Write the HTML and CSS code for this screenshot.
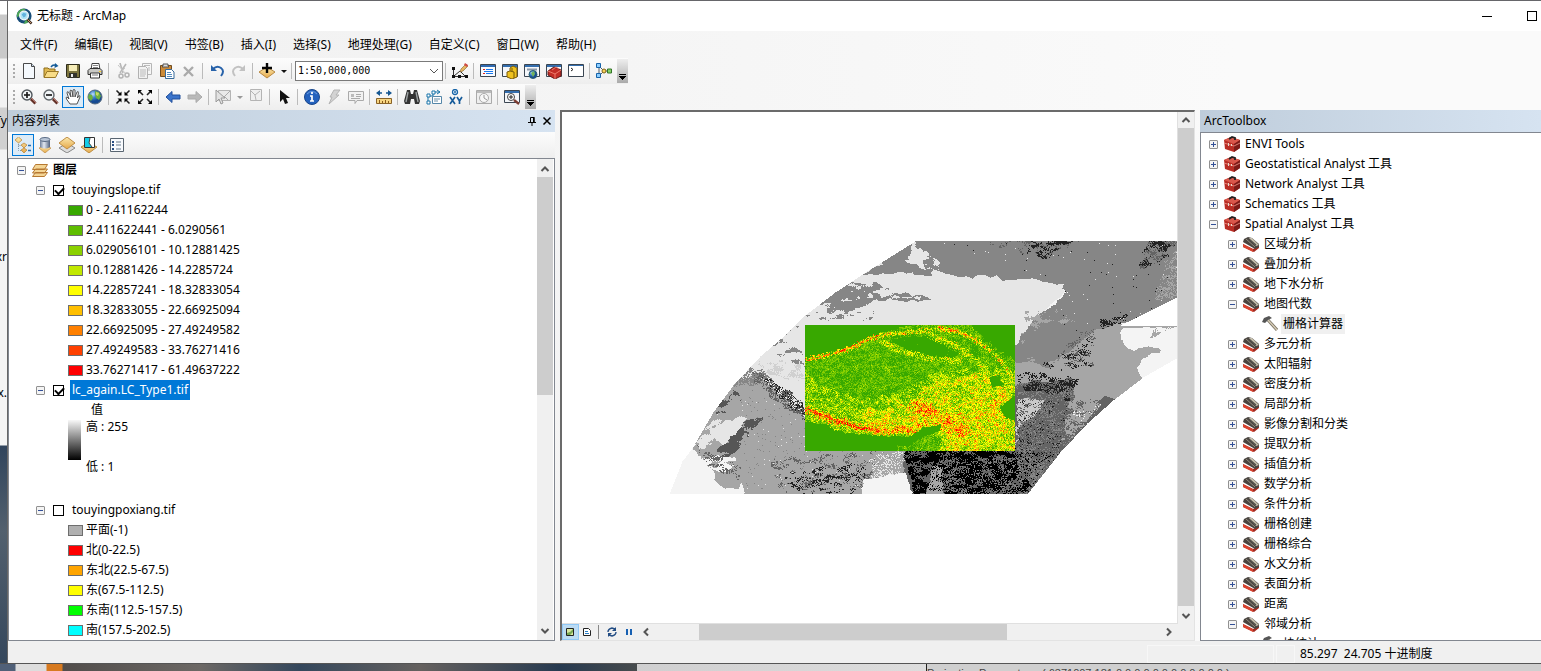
FILE: index.html
```html
<!DOCTYPE html>
<html lang="zh-CN">
<head>
<meta charset="utf-8">
<title>无标题 - ArcMap</title>
<link rel="stylesheet" href="styles.css">
</head>
<body>
<svg class="defs" width="0" height="0" aria-hidden="true">
<defs>
<linearGradient id="gold" x1="0" y1="0" x2="0" y2="1"><stop offset="0" stop-color="#fbe9ae"/><stop offset="1" stop-color="#e5a84a"/></linearGradient>
<linearGradient id="metal" x1="0" x2="1" y1="0" y2="0"><stop offset="0" stop-color="#6c7d98"/><stop offset=".4" stop-color="#e2e9f2"/><stop offset="1" stop-color="#50617d"/></linearGradient>
<radialGradient id="ocean" cx=".35" cy=".3"><stop offset="0" stop-color="#bfe0f8"/><stop offset=".5" stop-color="#3f83cf"/><stop offset="1" stop-color="#174b92"/></radialGradient>
</defs>
<symbol id="i-app" viewBox="0 0 18 18"><circle cx="8.500" cy="8.500" r="8" fill="#174d79"/><path d="M1 6Q4 0 10 1L8 4 5 4 4 8 1 10zM10 13l5-2-3 5-4 1z" fill="#4da557"/><circle cx="8.500" cy="8" r="4.600" fill="#aee3f4" stroke="#f2f8fb" stroke-width="1.400"/><path d="M6 7l2-2 3 1-1 3-2 1z" fill="#61b2dd"/><path d="M12 12l4.500 4.500" stroke="#3c2a20" stroke-width="2.600"/><path d="M12 12l4 4" stroke="#d5a37a"/></symbol>
<symbol id="i-new" viewBox="0 0 16 16"><path d="M2.500.500h8l3 3v12h-11z" fill="#f5f9fd" stroke="#4a4a4a"/><path d="M10.500.500v3h3" fill="#c9dcee" stroke="#4a4a4a"/></symbol>
<symbol id="i-open" viewBox="0 0 16 16"><path d="M1 14V5h4l1 1h6v3" fill="#e0b951" stroke="#8c6c1b"/><path d="M1 14.500l3-6h11.500l-3 6z" fill="#f8dc87" stroke="#9b7826"/><path d="M8 4q2-3 5-1.500" fill="none" stroke="#145b98" stroke-width="1.500"/><path d="M12 0l3.500 3-4 2z" fill="#145b98"/></symbol>
<symbol id="i-save" viewBox="0 0 16 16"><path d="M1.500 1.500h13v13h-12l-1-1z" fill="#7c743e" stroke="#2e2c1c"/><path d="M4 2h8v6H4z" fill="#f6edb8"/><path d="M4 10h8v5H4z" fill="#33332c"/><path d="M6 11h2v3H6z" fill="#eee"/></symbol>
<symbol id="i-print" viewBox="0 0 16 16"><path d="M4 7l1-6.500h7L13 7" fill="#fff" stroke="#444"/><path d="M6 2.500h5M6 4.500h5" stroke="#888"/><path d="M1 7.500l2-2h10l2 2v4H1z" fill="#c9c9c5" stroke="#333"/><path d="M3.500 10h9v5h-9z" fill="#fff" stroke="#333"/><path d="M5 12h6" stroke="#777"/><path d="M12 8h2v1h-2z" fill="#ffcf22"/></symbol>
<symbol id="i-cut" viewBox="0 0 16 16"><path d="M5 0l3 10M11 1L5 10" stroke="#b7b7b7" stroke-width="1.600"/><path d="M10 5L6 9M3 2l8 9" stroke="#c7c7c7"/><circle cx="6" cy="13" r="2" fill="none" stroke="#b3b3b3" stroke-width="1.500"/><circle cx="12" cy="12" r="2" fill="none" stroke="#b3b3b3" stroke-width="1.500"/></symbol>
<symbol id="i-copy" viewBox="0 0 16 16"><path d="M5.500.500h9v11h-9z" fill="#f6f6f6" stroke="#b6b6b6"/><path d="M1.500 3.500h7l2 2v10h-9z" fill="#f1f1f1" stroke="#b1b1b1"/><path d="M3 7h6M3 9h6M3 11h6M3 13h5M7 2.500h6M11 5h2M11 7h2" stroke="#bbb"/></symbol>
<symbol id="i-paste" viewBox="0 0 16 16"><path d="M1.500 2.500h11v11h-11z" fill="#cb8a38" stroke="#704c20"/><path d="M4 3V1h5v2l1 1H3z" fill="#ddd" stroke="#555"/><path d="M6.500 6.500h6l2.500 2.500v6.500H6.500z" fill="#fff" stroke="#376a9b"/><path d="M8 9.500h4M8 11.500h5M8 13.500h5" stroke="#558cc0"/></symbol>
<symbol id="i-del" viewBox="0 0 16 16"><path d="M3 4l9 9M12 4l-9 9" stroke="#aaa" stroke-width="2.400"/></symbol>
<symbol id="i-undo" viewBox="0 0 16 16"><path d="M4 6q4-4 8-1t0 8" fill="none" stroke="#2863aa" stroke-width="2"/><path d="M2 2v6h6z" fill="#2863aa"/></symbol>
<symbol id="i-redo" viewBox="0 0 16 16"><path d="M12 6Q8 2 4 5t0 8" fill="none" stroke="#c2c2c2" stroke-width="2"/><path d="M14 2v6H8z" fill="#c2c2c2"/></symbol>
<symbol id="i-add" viewBox="0 0 16 16"><path d="M0 9l8-5 8 5-8 6z" fill="url(#gold)" stroke="#b88943"/><path d="M8 0v10M3 5h10" stroke="#050505" stroke-width="2.400"/></symbol>
<symbol id="i-edit" viewBox="0 0 16 16"><path d="M1.500 5v8.500h13M2 13l6-5 5 5" fill="none" stroke="#333"/><path d="M0 4h3v3H0zM0 12h3v3H0zM6 12h3v3H6zM13 12h3v3h-3z" fill="#111"/><path d="M8 9l1-3 5-5 2 2-5 5z" fill="#e6b762" stroke="#82602d" stroke-width=".600"/><path d="M13 0l3 2-1 2-3-2z" fill="#d24c47"/></symbol>
<symbol id="i-toc" viewBox="0 0 16 16"><path d="M.500 1.500h15v12H.500z" fill="#f8fbff" stroke="#3b4652"/><path d="M1 2h14v2H1z" fill="#2f6bb2"/><path d="M3 6.500h2M3 10.500h2" stroke="#d22"/><path d="M6 6.500h7M4 8.500h9M6 10.500h7" stroke="#1878ef"/></symbol>
<symbol id="i-win" viewBox="0 0 16 16"><path d="M.500 1.500h15v12H.500z" fill="#f5f7fa" stroke="#3b4652"/><path d="M1 2h14v2H1z" fill="#346eae"/></symbol>
<symbol id="i-catalog" viewBox="0 0 16 16"><use href="#i-win"/><path d="M5 9l3-1V5l3-2 4 2v9l-5 2-5-2z" fill="#eec11e" stroke="#7d5d0a"/><path d="M8 8l4 1v6M10 5v3" fill="none" stroke="#725907"/></symbol>
<symbol id="i-search" viewBox="0 0 16 16"><use href="#i-win"/><path d="M3 6.500h10" stroke="#8a99aa" stroke-width="2"/><circle cx="9" cy="11.500" r="4" fill="url(#ocean)" stroke="#2a5f72"/><path d="M7 10l3-2 1 3-2 3z" fill="#71b35b"/></symbol>
<symbol id="i-tools" viewBox="0 0 16 16"><use href="#i-win"/><path d="M2 8l6-4 7 3v6l-6 3-7-4z" fill="#c32d26" stroke="#681d1a"/><path d="M6 7l4-3 3 2M2 8l7 3v5M9 11l6-4" fill="none" stroke="#ef7a6a"/></symbol>
<symbol id="i-python" viewBox="0 0 16 16"><path d="M.500 1.500h15v12H.500z" fill="#fff" stroke="#3b4652"/><path d="M1 2.500h14" stroke="#346eae"/><path d="M3 5l2 1.500L3 8" fill="none" stroke="#222"/></symbol>
<symbol id="i-model" viewBox="0 0 16 16"><path d="M3 3v10M3 3l5 5M3 13l5-5h6" fill="none" stroke="#4e5c68"/><path d="M.500.500h4v4h-4zM.500 10.500h4v4h-4z" fill="#8dceff" stroke="#1663a9"/><circle cx="8" cy="8" r="2" fill="#f8d058" stroke="#7e6418"/><path d="M11.500 6h4v4h-4z" fill="#88d268" stroke="#347529"/></symbol>
<symbol id="i-zin" viewBox="0 0 16 16"><circle cx="6" cy="6" r="5" fill="#f1f5f7" stroke="#4f565b" stroke-width="1.400"/><path d="M3 6h6M6 3v6" stroke="#111" stroke-width="1.600"/><path d="M10 10l4.500 4.500" stroke="#613027" stroke-width="3"/><path d="M10 9l5 5" stroke="#b27168"/></symbol>
<symbol id="i-zout" viewBox="0 0 16 16"><circle cx="6" cy="6" r="5" fill="#f1f5f7" stroke="#62686c" stroke-width="1.400"/><path d="M3 6h6" stroke="#111" stroke-width="1.600"/><path d="M10 10l4.500 4.500" stroke="#613027" stroke-width="3"/><path d="M10 9l5 5" stroke="#b27168"/></symbol>
<symbol id="i-pan" viewBox="0 0 16 16"><path d="M5 15L1.500 10Q.500 8 2 8l2 2L2 4q0-2 1.500-1L6 8 5 2q.500-2 2 0l1 6V1q1-1 2 0v7l2-5q1.500-1 1.500.500L12.500 9l1-2q2-1 1.500 1L12 15z" fill="#fff" stroke="#444" stroke-width=".900"/></symbol>
<symbol id="i-globe" viewBox="0 0 16 16"><circle cx="8" cy="8" r="7" fill="url(#ocean)" stroke="#55697e"/><path d="M8 2l4 1 2 4-2 4-3-2-1-4zM2 5l3 1 1 3-2 3-3-3z" fill="#6caf3e"/><path d="M9 3l3 1-1 3-2-1z" fill="#c8d764"/></symbol>
<symbol id="i-fixin" viewBox="0 0 16 16"><path d="M1.500 1.500l4 4M14.500 1.500l-4 4M1.500 14.500l4-4M14.500 14.500l-4-4" stroke="#222" stroke-width="1.600"/><path d="M6.500 2.500v4h-4zM9.500 2.500v4h4zM6.500 13.500v-4h-4zM9.500 13.500v-4h4z" fill="#000"/></symbol>
<symbol id="i-fixout" viewBox="0 0 16 16"><path d="M2 2l4 4M14 2l-4 4M2 14l4-4M14 14l-4-4" stroke="#222" stroke-width="1.600"/><path d="M1 5V1h4zM11 1h4v4zM1 11v4h4zM15 11v4h-4z" fill="#000"/></symbol>
<symbol id="i-back" viewBox="0 0 16 16"><path d="M1 8l6-5.500V6h8v4H7v3.500z" fill="#3b74cb" stroke="#214f9b"/></symbol>
<symbol id="i-fwd" viewBox="0 0 16 16"><path d="M15 8L9 2.500V6H1v4h8v3.500z" fill="#b9b9b9" stroke="#aaa"/></symbol>
<symbol id="i-selfeat" viewBox="0 0 16 16"><path d="M3.500 1.500h12v10h-12z" fill="#e9e9e9" stroke="#b4b4b4"/><path d="M9 8l6-6M9 7l4 4" fill="none" stroke="#aaa"/><path d="M1 1v12l3-3 2 5 2-1-2-5h4z" fill="#e2e2e2" stroke="#999"/></symbol>
<symbol id="i-clear" viewBox="0 0 16 16"><path d="M2.500.500h11v11h-11z" fill="#efefef" stroke="#b4b4b4"/><path d="M3 2l4 4 5-4M7 6l1 5" fill="none" stroke="#b4b4b4"/></symbol>
<symbol id="i-arrow" viewBox="0 0 16 16"><path d="M4 1v12l3-3 2 5 3-1-2-5h4z" fill="#111"/></symbol>
<symbol id="i-info" viewBox="0 0 16 16"><circle cx="8" cy="8" r="7.500" fill="#2361bd" stroke="#1a478b"/><path d="M3 5q5-5 10 0" fill="none" stroke="#6d9de1"/><path d="M8 3v2M6 7h2v5M6 12h4" fill="none" stroke="#fff" stroke-width="1.700"/></symbol>
<symbol id="i-bolt" viewBox="0 0 16 16"><path d="M8 1h6l-4 5h3L3 15l3-7H4z" fill="#d3d3d3" stroke="#b4b4b4"/></symbol>
<symbol id="i-popup" viewBox="0 0 16 16"><path d="M.500 2.500h15v9H9l-2 3v-3H.500z" fill="#f2f2f2" stroke="#aaa"/><path d="M3 5h3v3H3z" fill="#bbb"/><path d="M8 5.500h5M8 7.500h5M3 9.500h9" stroke="#aaa"/></symbol>
<symbol id="i-measure" viewBox="0 0 16 16"><path d="M2 4h4M10 4h4" stroke="#165792" stroke-width="1.500"/><path d="M0 4l4-3v6zM16 4l-4-3v6z" fill="#165792"/><path d="M.500 9.500h15v5H.500z" fill="#f7d581" stroke="#8a6328"/><path d="M3.500 11v3M6.500 12v2M9.500 11v3M12.500 12v2" stroke="#8a5b1a"/></symbol>
<symbol id="i-find" viewBox="0 0 16 16"><path d="M3 1h3l1 4h2l1-4h3l3 11-1 3h-4l-1-5H7l-1 5H1l-1-3z" fill="#333"/><path d="M4 3L2 13M12 3l2 10" stroke="#9ba0a1" stroke-width="1.400"/></symbol>
<symbol id="i-route" viewBox="0 0 16 16"><path d="M2 14V7h5V3h7M11 1l3 2-3 2" fill="none" stroke="#1875aa"/><path d="M1 5h3v3H1zM6 2h3v3H6zM1 12h3v3H1z" fill="#fff" stroke="#1875aa"/><path d="M6.500 7.500h9v7h-9z" fill="#fff" stroke="#5587a9"/><path d="M8 10h6M8 12h4" stroke="#6d91aa"/></symbol>
<symbol id="i-xy" viewBox="0 0 16 16"><circle cx="7" cy="3" r="2.500" fill="#eaf6ff" stroke="#1764a7" stroke-width="1.300"/><circle cx="7" cy="3" r="1" fill="#1764a7"/><path d="M2 8l5 7M7 8l-5 7M9 8l2.500 4L14 8M11.500 12v3" fill="none" stroke="#175c9b" stroke-width="1.700"/></symbol>
<symbol id="i-time" viewBox="0 0 16 16"><path d="M.500 1.500h15v13H.500z" fill="#eee" stroke="#aaa"/><path d="M1 3h14" stroke="#bbb" stroke-width="2"/><circle cx="8" cy="9" r="4.500" fill="#f7f7f7" stroke="#aaa"/><path d="M8 6v3l3 2" fill="none" stroke="#999"/></symbol>
<symbol id="i-viewer" viewBox="0 0 16 16"><use href="#i-win"/><circle cx="7" cy="8" r="3.500" fill="#fff" stroke="#444"/><path d="M5 8h4M7 6v4" stroke="#222"/><path d="M10 11l5 4" stroke="#7c3c31" stroke-width="2.300"/></symbol>
<symbol id="i-order" viewBox="0 0 16 16"><path d="M3.500 5v8.500H6M3.500 8.500H6" fill="none" stroke="#8797a5" stroke-dasharray="1 1"/><path d="M0 3l3.500-3L7 3 3.500 6zM6 8l3-2 3 2-3 3zM6 13l3-2 3 2-3 3z" fill="url(#gold)" stroke="#b78334" stroke-width=".700"/><path d="M13 8.500h3M13 13.500h3" stroke="#2770b6" stroke-width="1.500"/></symbol>
<symbol id="i-source" viewBox="0 0 16 16"><path d="M2 11l6-2 6 2-6 5z" fill="url(#gold)" stroke="#be8d42" stroke-width=".700"/><path d="M3 2v8q5 3 10 0V2z" fill="url(#metal)"/><ellipse cx="8" cy="2.500" rx="5" ry="2" fill="#b9c6d7" stroke="#596b84"/></symbol>
<symbol id="i-visible" viewBox="0 0 16 16"><path d="M0 11l8-5 8 5-8 5z" fill="#ddd" stroke="#888"/><path d="M0 6l8-6 8 6-8 6z" fill="url(#gold)" stroke="#be8d42"/></symbol>
<symbol id="i-selected" viewBox="0 0 16 16"><path d="M0 10l8-4 8 4-8 6z" fill="url(#gold)" stroke="#be8d42"/><path d="M3.500.500h10v10h-10z" fill="#fff" stroke="#333"/><path d="M4 1h5L8 6l3 4H4z" fill="#14cce8"/><path d="M9 1L8 6l3 4" fill="none" stroke="#444"/></symbol>
<symbol id="i-options" viewBox="0 0 16 16"><path d="M1.500 1.500h13v13h-13z" fill="#f8fafd" stroke="#596571"/><path d="M3 4h2v2H3zM3 7h2v2H3zM3 11h2v2H3z" fill="#294e83"/><path d="M7 5h5M7 8h5M7 12h5" stroke="#65788c"/></symbol>
<symbol id="i-layers" viewBox="0 0 16 16"><path d="M.500 14.500l3-4h12l-3 4zM.500 11l3-4h12l-3 4zM.500 7.500l3-5h12l-3 5z" fill="#f4d595" stroke="#b67932"/></symbol>
<symbol id="i-box" viewBox="0 0 16 16"><path d="M0 4l7-3 9 3v8l-6 4-9-3z" fill="#b92d25"/><path d="M0 4l7-3 9 3-6 4z" fill="#d9574b"/><path d="M10 8l6-4v8l-6 4z" fill="#7d1b18"/><path d="M0 7l10 3 6-3" fill="none" stroke="#ef9a8e" stroke-width=".800"/><path d="M5 3l3-2 3 1v2" fill="none" stroke="#222" stroke-width="1.800"/><path d="M4 7h1v3H4zM7 8h1v2H7z" fill="#e7d7cb"/></symbol>
<symbol id="i-set" viewBox="0 0 16 16"><path d="M0 8l10 5 6-3v2l-5 4L0 11z" fill="#a12a20"/><path d="M0 8l10 5v3L0 11z" fill="#d8432f"/><path d="M1 3l4-2 4 1 7 6v3l-4 2L0 6z" fill="#4a4540"/><path d="M6 2h3l7 7-3 1z" fill="#c5bfad"/><path d="M3 3l9 8" stroke="#918a7d"/><path d="M7 4l6 5" stroke="#54504a" stroke-width="1.200"/></symbol>
<symbol id="i-hammer" viewBox="0 0 16 16"><path d="M6 4l9 10" stroke="#746d5f" stroke-width="3"/><path d="M6 4l9 10" stroke="#d5cbb5" stroke-width="1.500"/><path d="M0 6l2-4 5-2 3 2-4 2-3 3z" fill="#555"/></symbol>
<symbol id="i-up" viewBox="0 0 16 16"><path d="M4.500 10L8 6.500l3.500 3.500" fill="none" stroke="#555" stroke-width="2"/></symbol>
<symbol id="i-down" viewBox="0 0 16 16"><path d="M4.500 6L8 9.500 11.500 6" fill="none" stroke="#555" stroke-width="2"/></symbol>
<symbol id="i-combo" viewBox="0 0 16 16"><path d="M4 6l4 4 4-4" fill="none" stroke="#555"/></symbol>
<symbol id="i-left" viewBox="0 0 16 16"><path d="M10 4.500L6.500 8l3.500 3.500" fill="none" stroke="#555" stroke-width="2"/></symbol>
<symbol id="i-right" viewBox="0 0 16 16"><path d="M6 4.500L9.500 8 6 11.500" fill="none" stroke="#555" stroke-width="2"/></symbol>
<symbol id="i-dataview" viewBox="0 0 16 16"><path d="M4.500 4.500h7v7h-7z" fill="#d9e7a2" stroke="#222"/><path d="M5 9l3-1 3-3v3l-3 3H5z" fill="#76a753"/></symbol>
<symbol id="i-layout" viewBox="0 0 16 16"><path d="M4.500 4.500h5l2 2v5h-7z" fill="#fff" stroke="#222"/><path d="M6 7h3v1H6zM6 9h4v1H6z" fill="#287dc5"/></symbol>
<symbol id="i-refresh" viewBox="0 0 16 16"><path d="M4 8q0-3 4-4l3 1M12 8q0 3-4 4l-3-1" fill="none" stroke="#234d84" stroke-width="1.400"/><path d="M12 3v4H8zM4 13V9h4z" fill="#234d84"/></symbol>
<symbol id="i-pause" viewBox="0 0 16 16"><path d="M5 5h2v6H5zM9 5h2v6H9z" fill="#1760b2"/></symbol>
<symbol id="i-pin" viewBox="0 0 10 10"><path d="M3.500 6V1.500H7V6M1 6.500h8M5 7v3" fill="none" stroke="#000"/><path d="M6 1h1.500v5H6z" fill="#000"/></symbol>
<symbol id="i-close" viewBox="0 0 10 10"><path d="M1.500 1.500l7 7M8.500 1.500l-7 7" stroke="#000" stroke-width="1.500"/></symbol>
</svg>

<div class="desktop">
  <aside class="behind-left" aria-hidden="true"><span>Ty</span><span>xr</span><span>x.</span></aside>
  <div class="window">
    <header class="titlebar">
      <svg class="app-icon"><use href="#i-app"/></svg>
      <h1>无标题 - ArcMap</h1>
      <div class="window-controls"><button class="minimize" aria-label="最小化"></button><button class="maximize" aria-label="最大化"></button></div>
    </header>
    <nav class="menubar">
      <button>文件(F)</button><button>编辑(E)</button><button>视图(V)</button><button>书签(B)</button><button>插入(I)</button><button>选择(S)</button><button>地理处理(G)</button><button>自定义(C)</button><button>窗口(W)</button><button>帮助(H)</button>
    </nav>
    <div class="toolbar" role="toolbar" aria-label="标准工具">
      <i class="grip"></i>
      <button aria-label="新建"><svg><use href="#i-new"/></svg></button><button aria-label="打开"><svg><use href="#i-open"/></svg></button><button aria-label="保存"><svg><use href="#i-save"/></svg></button><button aria-label="打印"><svg><use href="#i-print"/></svg></button><i class="sep"></i>
      <button aria-label="剪切"><svg><use href="#i-cut"/></svg></button><button aria-label="复制"><svg><use href="#i-copy"/></svg></button><button aria-label="粘贴"><svg><use href="#i-paste"/></svg></button><button aria-label="删除"><svg><use href="#i-del"/></svg></button><i class="sep"></i>
      <button aria-label="撤消"><svg><use href="#i-undo"/></svg></button><button aria-label="恢复"><svg><use href="#i-redo"/></svg></button><i class="sep"></i>
      <button aria-label="添加数据"><svg><use href="#i-add"/></svg></button><button class="drop" aria-label="更多数据"></button><i class="sep"></i>
      <div class="scale"><select aria-label="比例尺"><option>1:50,000,000</option></select><svg><use href="#i-combo"/></svg></div><i class="sep"></i>
      <button aria-label="编辑器"><svg><use href="#i-edit"/></svg></button><i class="sep"></i>
      <button aria-label="内容列表"><svg><use href="#i-toc"/></svg></button><button aria-label="目录"><svg><use href="#i-catalog"/></svg></button><button aria-label="搜索"><svg><use href="#i-search"/></svg></button><button aria-label="工具箱"><svg><use href="#i-tools"/></svg></button><button aria-label="Python"><svg><use href="#i-python"/></svg></button><i class="sep"></i>
      <button aria-label="模型构建器"><svg><use href="#i-model"/></svg></button><button class="overflow" aria-label="工具栏选项"></button>
    </div>
    <div class="toolbar" role="toolbar" aria-label="地图工具">
      <i class="grip"></i>
      <button aria-label="放大"><svg><use href="#i-zin"/></svg></button><button aria-label="缩小"><svg><use href="#i-zout"/></svg></button><button class="active" aria-label="平移"><svg><use href="#i-pan"/></svg></button><button aria-label="全图"><svg><use href="#i-globe"/></svg></button><i class="sep"></i>
      <button aria-label="固定比例放大"><svg><use href="#i-fixin"/></svg></button><button aria-label="固定比例缩小"><svg><use href="#i-fixout"/></svg></button><i class="sep"></i>
      <button aria-label="上一视图"><svg><use href="#i-back"/></svg></button><button aria-label="下一视图"><svg><use href="#i-fwd"/></svg></button><i class="sep"></i>
      <button aria-label="选择要素"><svg><use href="#i-selfeat"/></svg></button><button class="drop muted" aria-label="选择方式"></button><button aria-label="清除选择"><svg><use href="#i-clear"/></svg></button><i class="sep"></i>
      <button aria-label="选择元素"><svg><use href="#i-arrow"/></svg></button><i class="sep"></i>
      <button aria-label="识别"><svg><use href="#i-info"/></svg></button><button aria-label="超链接"><svg><use href="#i-bolt"/></svg></button><button aria-label="弹出窗口"><svg><use href="#i-popup"/></svg></button><i class="sep"></i>
      <button aria-label="测量"><svg><use href="#i-measure"/></svg></button><i class="sep"></i>
      <button aria-label="查找"><svg><use href="#i-find"/></svg></button><button aria-label="查找路径"><svg><use href="#i-route"/></svg></button><button aria-label="转到 XY"><svg><use href="#i-xy"/></svg></button><i class="sep"></i>
      <button aria-label="时间滑块"><svg><use href="#i-time"/></svg></button><i class="sep"></i>
      <button aria-label="查看器"><svg><use href="#i-viewer"/></svg></button><button class="overflow" aria-label="工具栏选项"></button>
    </div>

    <main class="workspace">
      <section class="panel">
        <header class="panel-title"><h2>内容列表</h2><button aria-label="自动隐藏"><svg><use href="#i-pin"/></svg></button><button aria-label="关闭"><svg><use href="#i-close"/></svg></button></header>
        <div class="toc-tools"><button class="active" aria-label="按绘制顺序列出"><svg><use href="#i-order"/></svg></button><button aria-label="按源列出"><svg><use href="#i-source"/></svg></button><button aria-label="按可见性列出"><svg><use href="#i-visible"/></svg></button><button aria-label="按选择列出"><svg><use href="#i-selected"/></svg></button><i class="sep"></i><button aria-label="选项"><svg><use href="#i-options"/></svg></button></div>
        <div class="toc-body">
          <ul class="toc">
            <li class="row root"><button class="exp" aria-label="折叠"></button><svg><use href="#i-layers"/></svg><b>图层</b></li>
            <li class="row layer"><button class="exp" aria-label="折叠"></button><input type="checkbox" id="l1" checked><label for="l1">touyingslope.tif</label></li>
            <li class="row cls"><i class="sw c1"></i>0 - 2.41162244</li>
            <li class="row cls"><i class="sw c2"></i>2.411622441 - 6.0290561</li>
            <li class="row cls"><i class="sw c3"></i>6.029056101 - 10.12881425</li>
            <li class="row cls"><i class="sw c4"></i>10.12881426 - 14.2285724</li>
            <li class="row cls"><i class="sw c5"></i>14.22857241 - 18.32833054</li>
            <li class="row cls"><i class="sw c6"></i>18.32833055 - 22.66925094</li>
            <li class="row cls"><i class="sw c7"></i>22.66925095 - 27.49249582</li>
            <li class="row cls"><i class="sw c8"></i>27.49249583 - 33.76271416</li>
            <li class="row cls"><i class="sw c9"></i>33.76271417 - 61.49637222</li>
            <li class="row layer"><button class="exp" aria-label="折叠"></button><input type="checkbox" id="l2" checked><label for="l2" class="picked">lc_again.LC_Type1.tif</label></li>
            <li class="row value">值</li>
            <li class="stretch"><i class="ramp"></i><div><span>高 : 255</span><span>低 : 1</span></div></li>
            <li class="row layer"><button class="exp" aria-label="折叠"></button><input type="checkbox" id="l3"><label for="l3">touyingpoxiang.tif</label></li>
            <li class="row cls"><i class="sw d1"></i>平面(-1)</li>
            <li class="row cls"><i class="sw c9"></i>北(0-22.5)</li>
            <li class="row cls"><i class="sw d2"></i>东北(22.5-67.5)</li>
            <li class="row cls"><i class="sw c5"></i>东(67.5-112.5)</li>
            <li class="row cls"><i class="sw d3"></i>东南(112.5-157.5)</li>
            <li class="row cls"><i class="sw d4"></i>南(157.5-202.5)</li>
          </ul>
          <div class="vbar toc-bar"><svg><use href="#i-up"/></svg><div class="track"><i class="thumb"></i><i class="rest"></i></div><svg><use href="#i-down"/></svg></div>
        </div>
      </section>

      <section class="map-pane">
        <div class="map-view"><canvas id="map" width="508" height="253" role="img" aria-label="坡度与土地覆盖地图"></canvas></div>
        <div class="vbar map-bar"><svg><use href="#i-up"/></svg><div class="track"><i class="thumb"></i><i class="rest"></i></div><svg><use href="#i-down"/></svg></div>
        <div class="hbar"><button class="on" aria-label="数据视图"><svg><use href="#i-dataview"/></svg></button><button aria-label="布局视图"><svg><use href="#i-layout"/></svg></button><i class="line"></i><button aria-label="刷新"><svg><use href="#i-refresh"/></svg></button><button aria-label="暂停"><svg><use href="#i-pause"/></svg></button><svg><use href="#i-left"/></svg><div class="htrack"><i class="before"></i><i class="thumb"></i><i class="after"></i></div><svg><use href="#i-right"/></svg></div>
      </section>

      <section class="panel">
        <header class="panel-title"><h2>ArcToolbox</h2></header>
        <ul class="toolbox">
          <li class="row"><button class="exp plus" aria-label="展开"></button><svg><use href="#i-box"/></svg>ENVI Tools</li>
          <li class="row"><button class="exp plus" aria-label="展开"></button><svg><use href="#i-box"/></svg>Geostatistical Analyst 工具</li>
          <li class="row"><button class="exp plus" aria-label="展开"></button><svg><use href="#i-box"/></svg>Network Analyst 工具</li>
          <li class="row"><button class="exp plus" aria-label="展开"></button><svg><use href="#i-box"/></svg>Schematics 工具</li>
          <li class="row"><button class="exp" aria-label="折叠"></button><svg><use href="#i-box"/></svg>Spatial Analyst 工具</li>
          <li class="row sub"><button class="exp plus" aria-label="展开"></button><svg><use href="#i-set"/></svg>区域分析</li>
          <li class="row sub"><button class="exp plus" aria-label="展开"></button><svg><use href="#i-set"/></svg>叠加分析</li>
          <li class="row sub"><button class="exp plus" aria-label="展开"></button><svg><use href="#i-set"/></svg>地下水分析</li>
          <li class="row sub"><button class="exp" aria-label="折叠"></button><svg><use href="#i-set"/></svg>地图代数</li>
          <li class="row leaf"><svg><use href="#i-hammer"/></svg><span class="hot">栅格计算器</span></li>
          <li class="row sub"><button class="exp plus" aria-label="展开"></button><svg><use href="#i-set"/></svg>多元分析</li>
          <li class="row sub"><button class="exp plus" aria-label="展开"></button><svg><use href="#i-set"/></svg>太阳辐射</li>
          <li class="row sub"><button class="exp plus" aria-label="展开"></button><svg><use href="#i-set"/></svg>密度分析</li>
          <li class="row sub"><button class="exp plus" aria-label="展开"></button><svg><use href="#i-set"/></svg>局部分析</li>
          <li class="row sub"><button class="exp plus" aria-label="展开"></button><svg><use href="#i-set"/></svg>影像分割和分类</li>
          <li class="row sub"><button class="exp plus" aria-label="展开"></button><svg><use href="#i-set"/></svg>提取分析</li>
          <li class="row sub"><button class="exp plus" aria-label="展开"></button><svg><use href="#i-set"/></svg>插值分析</li>
          <li class="row sub"><button class="exp plus" aria-label="展开"></button><svg><use href="#i-set"/></svg>数学分析</li>
          <li class="row sub"><button class="exp plus" aria-label="展开"></button><svg><use href="#i-set"/></svg>条件分析</li>
          <li class="row sub"><button class="exp plus" aria-label="展开"></button><svg><use href="#i-set"/></svg>栅格创建</li>
          <li class="row sub"><button class="exp plus" aria-label="展开"></button><svg><use href="#i-set"/></svg>栅格综合</li>
          <li class="row sub"><button class="exp plus" aria-label="展开"></button><svg><use href="#i-set"/></svg>水文分析</li>
          <li class="row sub"><button class="exp plus" aria-label="展开"></button><svg><use href="#i-set"/></svg>表面分析</li>
          <li class="row sub"><button class="exp plus" aria-label="展开"></button><svg><use href="#i-set"/></svg>距离</li>
          <li class="row sub"><button class="exp" aria-label="折叠"></button><svg><use href="#i-set"/></svg>邻域分析</li>
          <li class="row leaf"><svg><use href="#i-hammer"/></svg><span>块统计</span></li>
        </ul>
      </section>
    </main>
    <footer class="statusbar"><span class="cell wide"></span><span class="cell small"></span><output>85.297 &nbsp;24.705 十进制度</output></footer>
  </div>
  <div class="behind-bottom" aria-hidden="true"><i class="photo"></i><i class="gray"></i><span>Projection Parameters: ( 6371007.181 0 0 0 0 0 0 0 0 0 0 0 0 )</span></div>
</div>
<script src="map.js"></script>
</body>
</html>
```

FILE: styles.css
```css
* { box-sizing: border-box; }
body { margin: 0; overflow: hidden; font: 12px/20px "Noto Sans", "Noto Sans CJK SC", sans-serif; color: #000; }
h1, h2, ul { margin: 0; padding: 0; font: inherit; list-style: none; }
button { margin: 0; padding: 0; border: 0; background: none; font: inherit; color: inherit; }
svg { display: block; flex: none; width: 16px; height: 16px; }
.defs { position: absolute; width: 0; height: 0; }
.desktop { display: grid; grid-template: minmax(0, 1fr) 8px / 8px minmax(0, 1fr); height: 100vh; border-top: 1px solid #66666a; background: #46505c; }
.behind-left { display: flex; flex-direction: column; overflow: hidden; padding-top: 110px; gap: 116px; border-right: 1px solid #666; background: linear-gradient(#fff 13px, #c9c9c9 14px 57px, #f2f2f2 58px 106px, #d0d0d0 107px 148px, #f4f4f4 149px 444px, #30445c 445px, #52606e 530px, #35475c 100%); }
.behind-left span { display: flex; justify-content: flex-end; }
.behind-bottom { grid-column: 1 / -1; display: grid; grid-template-columns: 637fr 289fr 615fr; overflow: hidden; border-top: 1px solid #555; background: #cfcfcf; }
.photo { background: linear-gradient(90deg, #506078 15px, #ddd 16px 46px, #d77a20 47px 62px, #514d4b 63px, #6c6865 200px, #34475c 300px, #65615f 420px, #273a50 560px, #474b4d); }
.gray { background: linear-gradient(90deg, #cfcfd0, #ddd); }
.behind-bottom span { padding-top: 2px; font: 11px/14px "Liberation Sans", sans-serif; color: #444; white-space: nowrap; border-left: 1px solid #222; }

.window { display: flex; flex-direction: column; min-height: 0; background: linear-gradient(90deg, #f0f0f0, #fafafa 80%); }
.titlebar { display: flex; align-items: center; gap: 4px; flex: none; height: 30px; padding: 0 4px 0 8px; background: #fff; }
.app-icon { width: 17px; height: 17px; }
.window-controls { display: flex; gap: 35px; margin-left: auto; }
.window-controls button { width: 10px; height: 10px; }
.window-controls .minimize { background: linear-gradient(#000, #000) center / 10px 1px no-repeat; }
.window-controls .maximize { border: 1px solid #000; }
.menubar { display: flex; gap: 17px; flex: none; height: 27px; padding: 4px 12px; }
.menubar button { white-space: nowrap; }
.toolbar { display: flex; align-items: center; align-self: flex-start; flex: none; height: 26px; padding-left: 5px; background: linear-gradient(#fcfcfc, #eee); }
.toolbar button, .toc-tools button { display: flex; align-items: center; justify-content: center; width: 22px; height: 22px; }
.grip { width: 2px; height: 15px; margin-right: 3px; background: repeating-linear-gradient(#aaa 0 2px, transparent 2px 4px); }
.sep { width: 6px; height: 16px; background: linear-gradient(#bbb, #bbb) 2px 0 / 1px 100% no-repeat; }
.toolbar .active, .toc-tools .active { border: 1px solid #0078d7; background: #dcebf7; }
.toolbar .drop { width: 11px; }
.drop::after { content: ""; border: 3px solid transparent; border-top-color: #111; border-bottom: 0; }
.drop.muted::after { border-top-color: #999; }
.scale { display: flex; align-items: center; width: 148px; height: 20px; border: 1px solid #7a7a7a; background: #fff; }
.scale select { flex: 1; min-width: 0; appearance: none; border: 0; padding: 0 2px; background: none; color: #000; font: 10px/16px "DejaVu Sans Mono", monospace; }
.toolbar .overflow { align-items: flex-end; width: 11px; height: 24px; margin-left: 2px; padding-bottom: 3px; background: linear-gradient(#eee, #aaa); }
.overflow::after { content: ""; width: 7px; height: 6px; background: linear-gradient(#000, #000) top / 7px 1px no-repeat, conic-gradient(from -45deg at 50% 100%, #000 90deg, transparent 0) bottom / 7px 4px no-repeat; }

.workspace { display: grid; grid-template-columns: minmax(0, 547fr) minmax(0, 635fr) minmax(0, 341fr); gap: 5px; flex: 1; min-height: 0; }
.panel { display: flex; flex-direction: column; min-width: 0; min-height: 0; }
.panel-title { display: flex; align-items: center; gap: 5px; flex: none; height: 22px; padding: 0 3px 0 4px; background: linear-gradient(90deg, #bfcddb, #d6e3f1); }
.panel-title h2 { flex: 1; }
.panel-title svg { width: 10px; height: 10px; }
.toc-tools { display: flex; align-items: center; flex: none; height: 26px; padding-left: 4px; background: linear-gradient(#fcfcfc, #eee); }
.toc-body { display: flex; flex: 1; min-height: 0; border: 1px solid #828790; background: #fff; }
.toc { flex: 1; min-width: 0; overflow: hidden; padding-top: 1px; }
.row { display: flex; align-items: center; height: 20px; white-space: nowrap; }
.root { padding-left: 8px; }
.root svg { margin: 0 5px 0 6px; }
.layer { padding-left: 27px; }
.cls { padding-left: 59px; gap: 3px; }
.value { padding-left: 82px; }
.row .exp { flex: none; width: 9px; height: 9px; border: 1px solid #919191; border-radius: 1px; background: linear-gradient(#335097, #335097) center / 5px 1px no-repeat, #f4f4f4; }
.row .plus { background: linear-gradient(#335097, #335097) center / 5px 1px no-repeat, linear-gradient(#335097, #335097) center / 1px 5px no-repeat, #f4f4f4; }
input { appearance: none; flex: none; width: 11px; height: 11px; margin: 0 6px 0 8px; border: 1px solid #000; background: #fff; }
input:checked::after { content: ""; display: block; width: 7px; height: 4px; margin: 1px; border: solid #000; border-width: 0 0 2px 2px; transform: rotate(-45deg); }
label { padding: 0 2px; }
.picked { background: #0078d7; color: #fff; }
.sw { width: 15px; height: 11px; border: 1px solid #6e6e6e; }
.c1 { background: #38a800; } .c2 { background: #5fbd00; } .c3 { background: #8bd100; } .c4 { background: #c1e800; } .c5 { background: #ff0; } .c6 { background: #ffbf00; } .c7 { background: #ff8000; } .c8 { background: #ff4000; } .c9 { background: #f00; }
.d1 { background: #b0b0b0; } .d2 { background: #ffa500; } .d3 { background: #0f0; } .d4 { background: #0ff; }
.stretch { display: flex; gap: 5px; height: 80px; padding-left: 59px; }
.ramp { width: 13px; height: 40px; background: linear-gradient(#f8f8f8, #000); }
.stretch div { display: flex; flex-direction: column; gap: 20px; margin-top: -3px; }

.vbar { display: flex; flex-direction: column; flex: none; width: 16px; background: #f0f0f0; }
.track { display: flex; flex-direction: column; flex: 1; }
.thumb { background: #cdcdcd; }
.toc-bar { margin-right: 1px; padding: 2px 0 1px; }
.toc-bar .thumb { flex: 218; } .toc-bar .rest { flex: 227; }
.map-pane { display: grid; grid-template: minmax(0, 1fr) 16px / minmax(0, 1fr) 16px; border: 1px solid #e3e3e3; border-top: 2px solid #6b6b6b; border-left: 2px solid #6b6b6b; background: #f0f0f0; }
.map-view { display: flex; align-items: center; justify-content: flex-end; overflow: hidden; background: #fff; border-right: 1px solid #e0e0e0; border-bottom: 1px solid #e0e0e0; }
#map { flex: none; image-rendering: pixelated; }
.map-bar .thumb { flex: 477; } .map-bar .rest { flex: 2; }
.hbar { grid-column: 1 / -1; display: flex; align-items: stretch; padding-right: 17px; }
.hbar button { width: 17px; height: 16px; }
.hbar .on { background: #bcdcf4; border: 1px solid #90c8f6; }
.hbar .on svg { margin: -1px; }
.line { width: 1px; margin: 1px 5px 1px 2px; background: #888; }
.htrack { display: flex; flex: 1; }
.before { flex: 45; } .htrack .thumb { flex: 307; } .after { flex: 154; }
.toolbox { flex: 1; min-height: 0; overflow: hidden; padding-top: 1px; border: solid #828790; border-width: 1px 0 1px 1px; background: #fff; }
.toolbox .row { padding-left: 8px; }
.toolbox .sub { padding-left: 27px; }
.toolbox .leaf { padding-left: 61px; }
.toolbox svg { margin: 0 5px 0 6px; }
.toolbox .leaf svg { margin: 0 3px 0 0; }
.leaf span { padding: 0 2px; }
.hot { background: #f0f0f0; }
.statusbar { display: flex; align-items: center; justify-content: flex-end; gap: 2px; flex: none; height: 22px; padding-top: 3px; background: #f0f0f0; }
.cell { height: 18px; border: 1px solid #f7f7f7; }
.wide { width: 127px; } .small { width: 19px; }
output { width: 244px; padding-left: 3px; white-space: nowrap; }
```

FILE: map.js
```js
const X0 = 669, Y0 = 241;
const canvas = document.getElementById('map');
const ctx = canvas.getContext('2d');
const W = canvas.width, H = canvas.height;
const img = ctx.createImageData(W, H);

let seed = 4711;
function rnd() {
  seed = (seed + 0x6d2b79f5) | 0;
  let t = Math.imul(seed ^ (seed >>> 15), 1 | seed);
  t = (t + Math.imul(t ^ (t >>> 7), 61 | t)) ^ t;
  return ((t ^ (t >>> 14)) >>> 0) / 4294967296;
}
function hash(x, y) {
  let h = (x * 374761393 + y * 668265263) | 0;
  h = Math.imul(h ^ (h >>> 13), 1274126177);
  return ((h ^ (h >>> 16)) >>> 0) / 4294967296;
}
function noise(x, y) {
  const i = Math.floor(x), j = Math.floor(y), u = x - i, v = y - j;
  const a = hash(i, j) * (1 - u) + hash(i + 1, j) * u;
  const b = hash(i, j + 1) * (1 - u) + hash(i + 1, j + 1) * u;
  return a * (1 - v) + b * v;
}
function inside(p, x, y) {
  let r = false;
  for (let i = 0, j = p.length - 2; i < p.length; j = i, i += 2) {
    if ((p[i + 1] > y) !== (p[j + 1] > y) &&
        x < (p[j] - p[i]) * (y - p[i + 1]) / (p[j + 1] - p[i + 1]) + p[i]) r = !r;
  }
  return r;
}
function put(x, y, c) {
  const k = ((y - Y0) * W + x - X0) * 4;
  img.data[k] = c >> 16; img.data[k + 1] = c >> 8 & 255; img.data[k + 2] = c & 255; img.data[k + 3] = 255;
}
const outline = [669,494,682,461,692,448,713,412,733,385,760,356,787,333,805,315,835,292,870,269,915,241,1178,241,1178,296,1119,326,1178,326,1178,357,1143,377,1113,400,1087,423,1060,452,1027,494];

function each(p, wobble, fn) {
  for (let y = Y0; y < Y0 + H; y++) for (let x = X0; x < X0 + W; x++) {
    const dx = (noise(x / 5, y / 4) - .5) * wobble + (rnd() - .5) * wobble / 4;
    const dy = (noise(x / 6 + 90, y / 4 + 40) - .5) * wobble;
    if (inside(p, x + dx, y + dy) && inside(outline, x, y)) fn(x, y);
  }
}
/* density: share of cells drawn; clump: 0 for single cells, 1 for connected patches */
function cover(c, density, clump, wobble, p) {
  each(p, wobble, (x, y) => {
    const n = noise(x / 6 + c % 97, y / 3 + c % 31);
    if (n * clump + rnd() * (1 - clump) < density) put(x, y, c);
  });
}
const ramp = [0x38a800, 0x5fbd00, 0x8bd100, 0xc1e800, 0xffff00, 0xffbf00, 0xff8000, 0xff4000, 0xff0000];
function slopeAt(x, y, level, spread) {
  if (x < 805 || x > 1014 || y < 325 || y > 450) return;
  const v = level + (rnd() + rnd() - 1) * spread + (noise(x / 4, y / 3) - .5) * spread;
  put(x, y, ramp[Math.max(0, Math.min(8, Math.floor(v)))]);
}
function slope(level, spread, wobble, p) { each(p, wobble, (x, y) => slopeAt(x, y, level, spread)); }
function ridge(level, spread, width, p) {
  for (let i = 0; i + 3 < p.length; i += 2) {
    const n = Math.ceil(Math.hypot(p[i + 2] - p[i], p[i + 3] - p[i + 1]) * width * 2);
    for (let k = 0; k < n; k++) {
      const t = rnd();
      slopeAt(Math.round(p[i] + (p[i + 2] - p[i]) * t + (rnd() + rnd() - 1) * width),
              Math.round(p[i + 1] + (p[i + 3] - p[i + 1]) * t + (rnd() + rnd() - 1) * width), level, spread);
    }
  }
}

cover(0xf4f4f4, 2, 0, 0, outline);
cover(0xe6e6e6, 2, 0, 3, [733,383,760,350,800,310,870,262,915,235,960,262,1060,276,1064,292,1028,325,1018,360,805,420,760,385]);
/* steppe */
cover(0x868686, 2, 0, 6, [908,232,1190,232,1190,294,1119,330,1100,345,1090,362,1050,366,1012,366,1014,348,1028,325,1035,316,1050,308,1065,292,1062,284,1040,280,985,276,950,274,930,270,923,262,920,250]);
cover(0xe6e6e6, .48, .8, 5, [910,248,920,247,940,262,938,276,908,268]);
cover(0x868686, 2, 0, 5, [862,276,915,236,910,252,906,263,932,270,930,278,905,273]);
cover(0x868686, .62, .8, 6, [816,303,847,281,873,283,893,291,930,297,932,301,870,299,868,307,833,309]);
cover(0x868686, .38, .8, 8, [805,315,830,300,870,303,872,320,820,322]);
cover(0x868686, .36, .8, 6, [770,345,790,325,800,325,785,340,800,352,808,368,770,352]);
cover(0xa6a6a6, .42, .8, 6, [1025,312,1050,308,1080,320,1040,324,1022,345]);
cover(0xd0d0d0, .4, .7, 5, [755,355,800,365,805,385,765,372]);
cover(0x646464, .36, .6, 8, [985,240,1080,240,1045,258,1020,250]);
cover(0x222222, .45, .6, 8, [1028,240,1075,240,1045,258,1030,252]);
cover(0x646464, .5, .6, 8, [1145,240,1175,240,1160,262,1140,270]);
cover(0x222222, .42, .6, 8, [1145,240,1175,240,1160,262,1140,270]);
cover(0xa6a6a6, .44, .5, 6, [1165,262,1182,246,1182,300,1155,298]);
cover(0x222222, .44, .6, 6, [1100,318,1128,312,1125,322,1105,330]);
cover(0x222222, .003, 0, 0, [915,242,1177,242,1177,300,1060,350,1060,280]);
cover(0xe6e6e6, .003, 0, 0, [915,242,1177,242,1177,300,1060,350,1060,280]);
/* south-west lowlands */
cover(0xa6a6a6, 2, 0, 4, [733,378,760,377,805,418,805,448,910,448,908,472,864,479,860,500,745,500,742,480,738,488,725,488,715,480,713,470,692,450,706,412]);
cover(0x868686, .6, .4, 5, [738,366,764,369,775,382,750,384,730,388]);
cover(0x646464, .58, .4, 5, [750,370,764,373,805,405,805,420,775,402,760,386]);
cover(0x222222, .46, .5, 5, [762,376,775,380,805,406,805,418,780,400]);
cover(0xe6e6e6, 2, 0, 5, [712,428,738,415,744,418,738,432,722,444,710,436]);
cover(0x565656, .62, .8, 4, [715,450,733,435,745,420,764,416,750,432,736,450,720,460]);
cover(0x565656, .54, .8, 4, [733,390,740,395,735,405,728,398]);
cover(0x565656, .54, .7, 5, [710,405,728,400,722,412,715,415]);
cover(0xe6e6e6, .5, .8, 4, [693,448,704,430,718,413,722,420,708,450]);
cover(0xf4f4f4, .5, .8, 4, [695,452,735,456,732,468,715,472,705,462]);
cover(0x646464, .4, .6, 5, [695,446,740,460,738,478,706,465]);
cover(0x646464, .34, .6, 7, [770,458,880,448,864,490,780,490]);
cover(0x222222, .34, .6, 7, [780,476,860,462,865,475,858,494,798,494]);
cover(0xe6e6e6, .36, .3, 6, [870,455,905,452,900,475,872,478]);
cover(0x868686, .02, 0, 0, [740,380,805,425,907,452,864,490,745,490]);
cover(0xe6e6e6, .006, 0, 0, [740,380,805,425,907,452,864,490,745,490]);
/* south-east highlands */
cover(0xa6a6a6, 2, 0, 4, [1014,360,1060,356,1075,345,1097,328,1125,322,1121,340,1133,350,1147,345,1162,350,1143,357,1135,368,1148,384,1110,412,1040,412,1012,388]);
cover(0x868686, .6, .8, 5, [1014,355,1070,352,1050,368,1030,362,1014,362]);
cover(0xf4f4f4, 2, 0, 4, [1122,322,1182,322,1182,360,1146,382,1135,368,1143,357,1162,350,1147,345,1133,350,1120,340]);
cover(0xa6a6a6, 2, 0, 1, [1118,325,1180,325,1180,327,1118,327]);
cover(0xa6a6a6, .55, .6, 3, [1155,327,1175,327,1150,338]);
cover(0x646464, 2, 0, 5, [1012,384,1072,378,1076,402,1110,396,1118,404,1066,460,1030,502,915,502,903,470,905,448,1012,448]);
cover(0x868686, .36, .4, 4, [1016,384,1072,380,1078,425,1060,460,1027,496,1010,470,1016,451]);
cover(0x222222, .48, .6, 5, [1016,375,1030,372,1079,378,1070,400,1040,390,1020,390]);
cover(0x222222, .36, .7, 8, [1040,360,1065,355,1082,342,1092,335,1090,365,1060,372]);
cover(0x646464, .38, .5, 6, [1065,345,1095,325,1092,365,1060,368]);
cover(0xc9c9c9, .56, .5, 4, [1016,398,1045,400,1035,415,1020,422,1016,447]);
cover(0xa6a6a6, .55, .6, 5, [1070,400,1092,395,1103,404,1080,428,1062,442,1068,410]);
cover(0xf4f4f4, .26, .3, 3, [1072,412,1102,403,1080,421]);
cover(0x222222, .15, .2, 3, [1016,400,1070,400,1060,460,1016,470]);
cover(0x000000, .56, .6, 4, [903,448,1014,448,1018,470,1030,485,1020,500,915,500]);
cover(0x000000, .22, .2, 3, [1010,452,1055,452,1025,500,1010,500]);
cover(0x868686, .2, .2, 4, [940,460,1050,455,1025,500,945,500]);
cover(0xa6a6a6, .72, .5, 3, [932,466,940,466,943,500,925,500]);
cover(0xf4f4f4, 2, 0, 3, [864,479,905,472,914,500,860,500]);

/* slope raster */
slope(.1, 0, 0, [805,325,1015,325,1015,451,805,451]);
slope(1.3, 1.8, 5, [800,358,830,354,870,338,900,328,940,320,1020,320,1020,456,895,456,897,436,855,434,820,420,800,415]);
slope(2.2, 2.9, 6, [800,370,820,384,860,398,900,394,940,370,1020,370,1020,440,850,434,800,418]);
slope(3.4, 3.2, 6, [860,410,905,405,935,380,1000,370,1013,400,1018,456,935,456,942,425,870,434]);
slope(4.1, 3.3, 6, [900,405,935,405,975,418,995,395,1012,380,1010,405,985,440,955,448,940,425,910,425]);
slope(.2, .8, 4, [888,338,912,335,930,336,957,353,950,358,918,357]);
slope(.2, .6, 5, [970,322,1018,322,1018,360,1000,353,985,340]);
slope(.4, 1, 4, [968,347,978,346,980,358,970,356]);
slope(.3, .8, 4, [988,378,999,374,1002,384,992,388]);
slope(.1, .4, 3, [1000,407,1018,390,1018,420,1006,418]);
ridge(4.2, 3.5, 3, [805,359,830,354,850,348,870,338,885,334,910,332,940,328,960,332,980,342,1000,360,1012,378]);
ridge(6.5, 2, 1, [805,361,830,354,850,347,868,339,880,334]);
ridge(6, 2, 1, [950,329,965,334,980,343]);
ridge(3, 3, 4, [880,342,905,352,930,358,960,361]);
ridge(3, 3, 4, [930,335,955,345,975,360,990,372]);
ridge(5, 3.5, 6, [805,409,830,418,855,425,880,430,910,429,925,422]);
ridge(7.5, 2, 2, [805,408,835,420,855,426,880,431]);
ridge(6.2, 3, 8, [912,408,930,410,950,425,965,432]);
slope(.1, .3, 3, [800,418,820,426,845,436,880,439,910,435,930,425,942,424,938,431,922,438,905,446,890,444,888,456,800,456]);

ctx.putImageData(img, 0, 0);
```
